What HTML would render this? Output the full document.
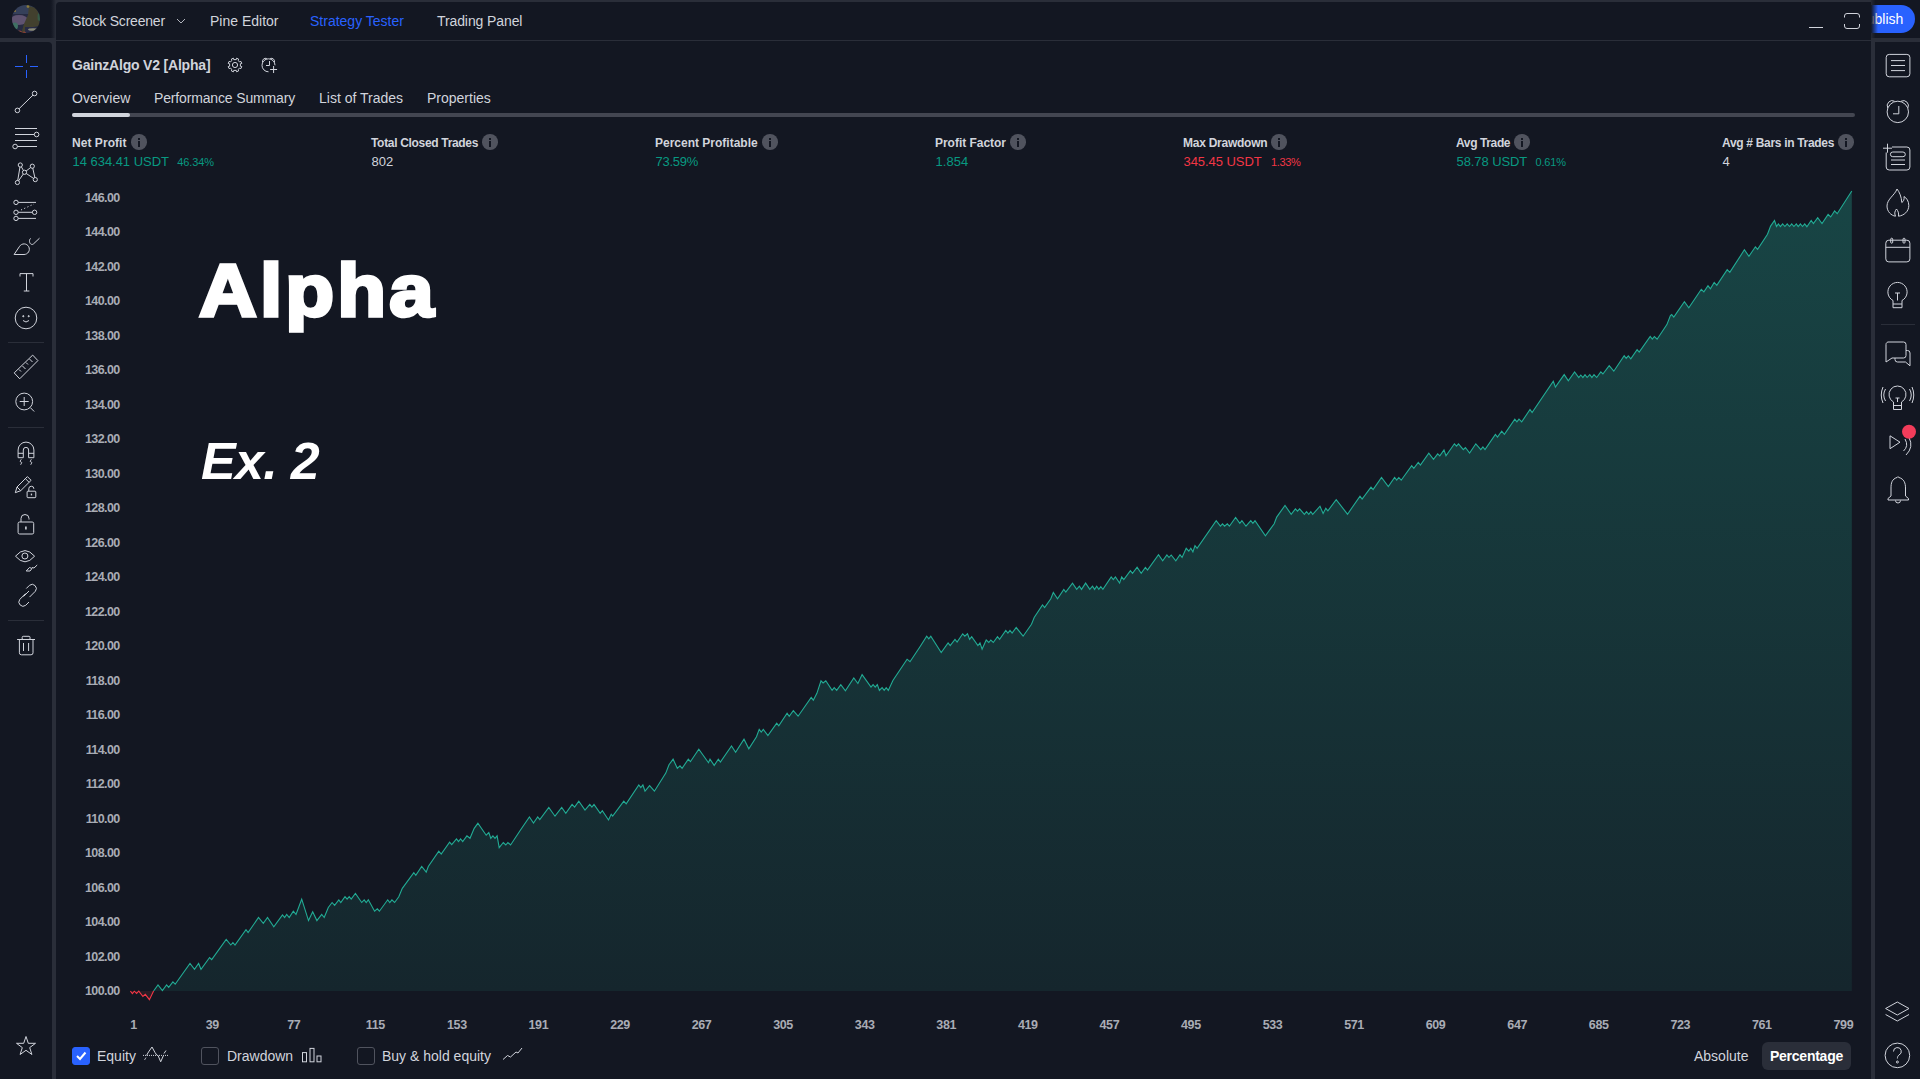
<!DOCTYPE html>
<html><head><meta charset="utf-8">
<style>
*{box-sizing:border-box}
html,body{margin:0;padding:0}
body{width:1920px;height:1079px;overflow:hidden;background:#2a2e39;font-family:"Liberation Sans",sans-serif;color:#d1d4dc;position:relative}
.p{position:absolute;background:#131722}
.t{position:absolute;white-space:nowrap;line-height:1}
svg{position:absolute;overflow:visible}
.yl{left:60px;width:59.6px;text-align:right;font-size:12.5px;letter-spacing:-0.6px;font-weight:bold;color:#a9acb5}
.xl{top:1019px;width:60px;text-align:center;font-size:12.5px;letter-spacing:-0.4px;font-weight:bold;color:#a9acb5}
.ml{top:137px;font-size:12px;font-weight:bold;color:#d1d4dc}
.info{position:absolute;top:134.1px;width:15.6px;height:15.6px;border-radius:50%;background:#50535e}
.info i{position:absolute;left:7px;top:3.5px;width:2px;height:2px;background:#131722}
.info b{position:absolute;left:7px;top:6.5px;width:2px;height:6px;background:#131722}
.mv{top:154.5px;font-size:13px}
.ms{top:156.5px;font-size:11px}
.cb{position:absolute;top:1047px;width:18px;height:18px;border:1px solid #50535e;border-radius:3px}
.lg{top:1049px;font-size:14px;color:#d1d4dc}
</style></head><body>
<div style="position:absolute;left:0;top:0;width:56px;height:38px;background:linear-gradient(90deg,#131722 51px,#2a2e39 56px)"></div>
<div class="p" style="left:0;top:42px;width:52px;height:1037px;border-top-right-radius:4px"></div>
<div style="position:absolute;left:1871px;top:0;width:49px;height:38px;background:linear-gradient(90deg,#252935 0,#131722 4.5px)"></div>
<div class="p" style="left:1875px;top:42px;width:45px;height:1037px"></div>
<svg width="28" height="28" style="left:12.2px;top:4.9px" viewBox="0 0 28 28"><defs><clipPath id="av"><circle cx="14" cy="14" r="14"/></clipPath><filter id="bl"><feGaussianBlur stdDeviation="0.6"/></filter></defs><g clip-path="url(#av)"><g filter="url(#bl)">
<rect x="-2" y="-2" width="32" height="32" fill="#262c42"/>
<rect x="-2" y="-2" width="32" height="11" fill="#34405a"/>
<ellipse cx="7" cy="15" rx="9" ry="5" fill="#5e5270"/>
<path d="M17 1L24 3L28 11L27 21L21 22L15 26L9 29L12 19L16 10Z" fill="#42402e"/>
<rect x="13" y="22" width="16" height="7" fill="#262b45"/>
<ellipse cx="21" cy="24.5" rx="5" ry="1.3" fill="#8a8a78"/>
<ellipse cx="3" cy="21" rx="3" ry="3.5" fill="#3f7064"/>
<ellipse cx="7.5" cy="27" rx="2.5" ry="1.6" fill="#8e4438"/>
<ellipse cx="12" cy="28" rx="2" ry="1.6" fill="#8e4438"/>
<ellipse cx="27.5" cy="12" rx="2" ry="4" fill="#345a46"/>
<circle cx="16" cy="1.5" r="1.4" fill="#8a7a3c"/><circle cx="3" cy="6" r="1" fill="#8a7a3c"/>
</g></g></svg>
<div style="position:absolute;left:1830px;top:5px;width:85px;height:28px;border-radius:14px;background:#2962ff"></div><div class="t" style="left:1803.3px;width:100px;text-align:right;top:12px;font-size:14px;color:#fff">Publish</div>
<div class="p" style="left:56px;top:2px;width:1815px;height:1077px;border-top-left-radius:4px"></div><div style="position:absolute;left:1871px;top:5px;width:7px;height:28px;background:linear-gradient(90deg,#131722,rgba(19,23,34,0))"></div>
<div style="position:absolute;left:56px;top:40px;width:1815px;height:1px;background:#2a2e39"></div>

<div class="t" style="left:72px;top:14px;font-size:14px;letter-spacing:-0.2px">Stock Screener</div>
<div class="t" style="left:210px;top:14px;font-size:14px">Pine Editor</div>
<div class="t" style="left:310px;top:14px;font-size:14px;color:#2962ff">Strategy Tester</div>
<div class="t" style="left:437px;top:14px;font-size:14px;letter-spacing:-0.1px">Trading Panel</div>

<div class="t" style="left:72px;top:58px;font-size:14px;font-weight:bold;letter-spacing:-0.2px">GainzAlgo V2 [Alpha]</div>
<div class="t" style="left:72px;top:91px;font-size:14px">Overview</div>
<div class="t" style="left:154px;top:91px;font-size:14px;letter-spacing:-0.15px">Performance Summary</div>
<div class="t" style="left:319px;top:91px;font-size:14px">List of Trades</div>
<div class="t" style="left:427px;top:91px;font-size:14px">Properties</div>
<div style="position:absolute;left:72px;top:113px;width:1783px;height:4px;border-radius:2px;background:#434651"></div>
<div style="position:absolute;left:72px;top:113px;width:58px;height:4px;border-radius:2px;background:#d1d4dc"></div>

<div class="t ml" style="left:72px;letter-spacing:0.05px">Net Profit</div>
<div class="info" style="left:131.1px"><i></i><b></b></div>
<div class="t mv" style="left:72.5px;color:#089981;letter-spacing:-0.03px">14 634.41 USDT</div>
<div class="t ms" style="left:177.3px;color:#089981;letter-spacing:-0.10px">46.34%</div>
<div class="t ml" style="left:371px;letter-spacing:-0.32px">Total Closed Trades</div>
<div class="info" style="left:482.2px"><i></i><b></b></div>
<div class="t mv" style="left:371.5px;color:#d1d4dc;letter-spacing:0.00px">802</div>
<div class="t ml" style="left:655px;letter-spacing:0.00px">Percent Profitable</div>
<div class="info" style="left:762.2px"><i></i><b></b></div>
<div class="t mv" style="left:655.5px;color:#089981;letter-spacing:-0.25px">73.59%</div>
<div class="t ml" style="left:935px;letter-spacing:-0.03px">Profit Factor</div>
<div class="info" style="left:1010.2px"><i></i><b></b></div>
<div class="t mv" style="left:935.5px;color:#089981;letter-spacing:0.05px">1.854</div>
<div class="t ml" style="left:1183px;letter-spacing:-0.25px">Max Drawdown</div>
<div class="info" style="left:1271.2px"><i></i><b></b></div>
<div class="t mv" style="left:1183.5px;color:#f23645;letter-spacing:-0.05px">345.45 USDT</div>
<div class="t ms" style="left:1271.0px;color:#f23645;letter-spacing:-0.35px">1.33%</div>
<div class="t ml" style="left:1456px;letter-spacing:-0.38px">Avg Trade</div>
<div class="info" style="left:1514.2px"><i></i><b></b></div>
<div class="t mv" style="left:1456.5px;color:#089981;letter-spacing:-0.08px">58.78 USDT</div>
<div class="t ms" style="left:1535.5px;color:#089981;letter-spacing:-0.15px">0.61%</div>
<div class="t ml" style="left:1722px;letter-spacing:-0.31px">Avg # Bars in Trades</div>
<div class="info" style="left:1838.2px"><i></i><b></b></div>
<div class="t mv" style="left:1722.5px;color:#d1d4dc;letter-spacing:0.00px">4</div>

<div class="t yl" style="top:191.5px">146.00</div>
<div class="t yl" style="top:226.0px">144.00</div>
<div class="t yl" style="top:260.5px">142.00</div>
<div class="t yl" style="top:295.0px">140.00</div>
<div class="t yl" style="top:329.5px">138.00</div>
<div class="t yl" style="top:364.0px">136.00</div>
<div class="t yl" style="top:398.6px">134.00</div>
<div class="t yl" style="top:433.1px">132.00</div>
<div class="t yl" style="top:467.6px">130.00</div>
<div class="t yl" style="top:502.1px">128.00</div>
<div class="t yl" style="top:536.6px">126.00</div>
<div class="t yl" style="top:571.1px">124.00</div>
<div class="t yl" style="top:605.6px">122.00</div>
<div class="t yl" style="top:640.1px">120.00</div>
<div class="t yl" style="top:674.6px">118.00</div>
<div class="t yl" style="top:709.1px">116.00</div>
<div class="t yl" style="top:743.6px">114.00</div>
<div class="t yl" style="top:778.1px">112.00</div>
<div class="t yl" style="top:812.7px">110.00</div>
<div class="t yl" style="top:847.2px">108.00</div>
<div class="t yl" style="top:881.7px">106.00</div>
<div class="t yl" style="top:916.2px">104.00</div>
<div class="t yl" style="top:950.7px">102.00</div>
<div class="t yl" style="top:985.2px">100.00</div>

<div class="t xl" style="left:103.6px">1</div>
<div class="t xl" style="left:182.2px">39</div>
<div class="t xl" style="left:263.8px">77</div>
<div class="t xl" style="left:345.3px">115</div>
<div class="t xl" style="left:426.9px">153</div>
<div class="t xl" style="left:508.4px">191</div>
<div class="t xl" style="left:590.0px">229</div>
<div class="t xl" style="left:671.6px">267</div>
<div class="t xl" style="left:753.1px">305</div>
<div class="t xl" style="left:834.7px">343</div>
<div class="t xl" style="left:916.2px">381</div>
<div class="t xl" style="left:997.8px">419</div>
<div class="t xl" style="left:1079.4px">457</div>
<div class="t xl" style="left:1160.9px">495</div>
<div class="t xl" style="left:1242.5px">533</div>
<div class="t xl" style="left:1324.0px">571</div>
<div class="t xl" style="left:1405.6px">609</div>
<div class="t xl" style="left:1487.2px">647</div>
<div class="t xl" style="left:1568.7px">685</div>
<div class="t xl" style="left:1650.3px">723</div>
<div class="t xl" style="left:1731.8px">761</div>
<div class="t xl" style="left:1813.4px">799</div>


<svg width="1920" height="1079" style="left:0;top:0">
<defs>
<linearGradient id="gf" x1="0" y1="190" x2="0" y2="991" gradientUnits="userSpaceOnUse">
<stop offset="0" stop-color="#184545"/><stop offset="1" stop-color="#15262d"/>
</linearGradient>
</defs>
<polygon points="153.6,991 153.6,991 158,985 162.4,990.5 166.6,984.9 168.7,987.3 172.9,981.9 175.2,984.2 190,963.5 194.5,969.3 198.6,963.5 201,969.3 209.6,957.5 211.7,959.6 226.2,939.4 230.8,945 232.9,942.5 235,945 246,929.6 248.1,932.5 258.5,917.5 263.3,923.3 267.5,917.5 273.8,926.9 282.5,915 284.6,917.5 286.7,914.4 289.2,917.5 293.3,911.2 296,914.4 301.7,899.2 308.5,920.6 312.7,911.7 316.9,920.6 321.7,914.4 324.2,917.5 328.3,907.5 332.1,902.5 334.6,905.4 338.8,899.8 340.8,902.5 345,896.7 347.1,899.2 349.2,896.7 351.2,899.2 355.4,893.5 361.7,902.5 364.2,899.8 366.2,902.5 368.3,899.8 374.6,911.2 377.3,908.8 379.4,911.2 387.7,899.8 389.8,902.5 391.9,899.8 394.6,902.5 398.8,896.7 402.3,888.3 413.8,872.7 415.8,875.4 421.7,866.5 426.2,872.1 428.3,866.5 438.8,851.2 441.2,854 449.6,842.1 451.7,844.6 456.5,838.8 458.5,841.5 460.6,838.8 462.7,841.5 466.9,835.8 470,838.3 474.2,828.3 477.9,823.3 486.2,835.2 488.8,832.5 490.8,838.3 492.9,835.8 495,838.3 497.1,835.8 499.2,847.7 503.3,842.5 505.8,845 507.9,842.5 510.6,845 520,830.8 529.4,816.9 533.5,823.1 537.7,816.9 539.8,819.6 548.8,807.5 555,816.2 561.7,807.5 565.8,813.3 572.1,804.4 574.6,807.1 578.8,801.2 585,810 589.8,804.4 591.9,807.1 594,804.4 600.2,813.3 602.3,810.6 608.5,820 611.2,814.2 612.7,816.2 623.8,801.2 626.2,803.8 638.8,785 640.8,787.7 642.9,785 645,791.2 649.6,785.6 654.4,791.2 665.8,773.1 669,764.8 673.1,759.2 677.3,768.3 680,765.8 682.1,768.3 688.3,759.2 690.4,761.7 698.8,749.2 708.5,762.7 710,759.2 714.2,765.4 718.3,759.2 720.4,762.1 731.5,746 735.6,752.3 744,739.2 748.8,748.8 756.5,736.7 759.2,729.4 761.2,732.1 763.3,729.4 767.9,735.6 776.7,723.1 778.8,725.8 787.1,713.3 789.2,716.2 793.3,710.6 798.1,716.2 811.2,697.5 813.3,700.2 816.9,693.3 821,680.8 823.1,682.9 825.8,680.8 832.1,690.4 834.2,687.7 836.7,690.4 840.8,684.6 845.4,690.8 853.8,677.9 857.9,683.5 862.1,674.6 871,687.1 873.1,684.6 875.2,687.1 877.3,684.6 879.4,690.4 882.1,687.7 884.2,690.4 886.2,687.7 888.3,690.4 892.9,680.4 907.1,659.2 910,661.7 920,646.7 926.7,636.2 928.8,638.8 930.8,636.2 941.2,652.5 948.1,642.9 950.2,645.6 955,639.4 957.1,642.1 962.7,633.8 964.8,636.2 967.5,633.8 969.6,639.4 971.7,636.7 977.9,645.6 980,642.9 982.1,649.2 986.2,640 988.8,642.5 990.8,640 993.3,642.5 997.5,636.7 999.6,639.4 1005.8,630.4 1007.9,633.1 1010,630.4 1012.1,633.1 1016.2,627.5 1023.1,636.2 1031.5,624.2 1034.2,617.5 1042.5,605 1044.6,607.5 1050.8,598.8 1053.3,592.5 1057.5,598.8 1063.8,589.4 1065.8,592.1 1072.5,583.1 1076.7,589.4 1079.4,586.2 1081.5,589.4 1085.6,583.1 1089.8,589.4 1092.5,586.2 1094.6,589.4 1096.7,586.2 1098.8,589.4 1100.8,586.7 1102.9,589.4 1111.2,576.9 1113.3,579.6 1115.4,576.9 1119.6,583.1 1121.7,576.9 1123.8,579.6 1130.4,570.6 1132.5,573.3 1137.1,567.1 1141.2,573.3 1145.4,567.5 1147.5,570 1158.5,554.6 1162.7,560.8 1166.9,555 1169,557.5 1171.2,555 1175.8,560.8 1180,554.6 1182.1,557.5 1186.2,548.3 1188.8,551.2 1190.8,548.3 1192.9,551.9 1195,545.6 1197.1,548.3 1216.2,520.6 1220.4,526.2 1222.5,523.8 1224.6,526.2 1227.3,523.8 1229.4,526.2 1235.6,517.5 1239.8,523.3 1241.9,520.6 1246,526.2 1250.8,520.6 1252.9,523.3 1255,520.6 1265.4,535.8 1274.2,523.8 1276.7,517.1 1285,505.4 1291.2,514.4 1295.4,508.8 1297.5,511.2 1299.6,508.8 1304.4,514.4 1306.5,511.7 1308.8,514.4 1310.8,511.7 1312.7,514.4 1320,506.2 1323.1,513.5 1325.8,508.3 1327.9,510.8 1336.2,499.6 1347.5,514.2 1360,496.2 1362.1,499 1371,487.1 1373.1,489.6 1381.5,477.5 1388.3,486.5 1394.6,477.5 1396.7,480.2 1398.8,477.5 1401.2,480.2 1411.7,465.6 1413.8,468.3 1418.3,462.5 1420.4,465 1428.8,453.1 1433.5,459.4 1437.7,453.8 1439.8,455.8 1444,450 1446,455.8 1454.4,443.8 1456.5,446.2 1458.5,443.8 1463.3,449.6 1465.4,447.5 1469.6,453.1 1475.8,443.8 1480.8,449.6 1482.9,446.9 1485,449.6 1495.4,434.4 1497.5,437.1 1501.7,431.2 1504.4,434.4 1514.8,419.2 1516.9,421.9 1519,419.2 1521.7,421.9 1530,409.4 1532.1,412.5 1553.3,381.2 1555.4,387.1 1564.2,374.6 1568.3,380.8 1574.6,371.9 1578.8,377.5 1580.8,375 1582.9,377.5 1585,374.6 1587.1,377.5 1589.8,374.6 1591.9,377.5 1594,374.6 1596.7,377.5 1600.8,371.9 1602.9,374 1609.2,365.6 1613.8,371.2 1624.2,355.8 1626.2,358.3 1628.3,355.8 1630.8,358.8 1637.1,349.6 1639.2,352.1 1650.2,336.5 1652.3,339.2 1654.4,336.5 1657.1,339.2 1666.9,324.6 1670.4,315.6 1671.7,314.6 1673.8,317.1 1684.4,301.7 1688.8,307.8 1701.3,289.3 1703.9,291.9 1708,285.8 1710.4,288.8 1714.2,282.5 1716.8,285.4 1727.2,269.6 1729.8,272.4 1744.4,249.8 1748.9,256.3 1755.4,246.8 1757.6,249.4 1767.5,234.2 1770.6,226.1 1774.5,220.5 1776.5,226.5 1778.4,223.9 1780.4,226.5 1782.6,223.9 1784.9,226.5 1787.2,223.9 1789.5,226.5 1791.7,223.9 1793.9,226.5 1796.3,223.9 1798.2,226.5 1800.4,223.9 1802.5,226.5 1804.7,223.9 1806.9,226.7 1811.2,220.5 1813.4,223.5 1817.7,217.6 1822,223.5 1828.1,214.4 1830.7,217 1834.6,210.9 1837.2,213.7 1851.8,191 1851.8,991" fill="url(#gf)"/>
<polygon points="130.4,991 130.4,991.2 132.4,993.6 134.3,991.2 136.6,993.4 138.8,991.2 142.9,996.5 145.3,994.4 149.4,999.7 153.6,991 153.6,991" fill="#2a1d26"/>
<polyline points="153.6,991 158,985 162.4,990.5 166.6,984.9 168.7,987.3 172.9,981.9 175.2,984.2 190,963.5 194.5,969.3 198.6,963.5 201,969.3 209.6,957.5 211.7,959.6 226.2,939.4 230.8,945 232.9,942.5 235,945 246,929.6 248.1,932.5 258.5,917.5 263.3,923.3 267.5,917.5 273.8,926.9 282.5,915 284.6,917.5 286.7,914.4 289.2,917.5 293.3,911.2 296,914.4 301.7,899.2 308.5,920.6 312.7,911.7 316.9,920.6 321.7,914.4 324.2,917.5 328.3,907.5 332.1,902.5 334.6,905.4 338.8,899.8 340.8,902.5 345,896.7 347.1,899.2 349.2,896.7 351.2,899.2 355.4,893.5 361.7,902.5 364.2,899.8 366.2,902.5 368.3,899.8 374.6,911.2 377.3,908.8 379.4,911.2 387.7,899.8 389.8,902.5 391.9,899.8 394.6,902.5 398.8,896.7 402.3,888.3 413.8,872.7 415.8,875.4 421.7,866.5 426.2,872.1 428.3,866.5 438.8,851.2 441.2,854 449.6,842.1 451.7,844.6 456.5,838.8 458.5,841.5 460.6,838.8 462.7,841.5 466.9,835.8 470,838.3 474.2,828.3 477.9,823.3 486.2,835.2 488.8,832.5 490.8,838.3 492.9,835.8 495,838.3 497.1,835.8 499.2,847.7 503.3,842.5 505.8,845 507.9,842.5 510.6,845 520,830.8 529.4,816.9 533.5,823.1 537.7,816.9 539.8,819.6 548.8,807.5 555,816.2 561.7,807.5 565.8,813.3 572.1,804.4 574.6,807.1 578.8,801.2 585,810 589.8,804.4 591.9,807.1 594,804.4 600.2,813.3 602.3,810.6 608.5,820 611.2,814.2 612.7,816.2 623.8,801.2 626.2,803.8 638.8,785 640.8,787.7 642.9,785 645,791.2 649.6,785.6 654.4,791.2 665.8,773.1 669,764.8 673.1,759.2 677.3,768.3 680,765.8 682.1,768.3 688.3,759.2 690.4,761.7 698.8,749.2 708.5,762.7 710,759.2 714.2,765.4 718.3,759.2 720.4,762.1 731.5,746 735.6,752.3 744,739.2 748.8,748.8 756.5,736.7 759.2,729.4 761.2,732.1 763.3,729.4 767.9,735.6 776.7,723.1 778.8,725.8 787.1,713.3 789.2,716.2 793.3,710.6 798.1,716.2 811.2,697.5 813.3,700.2 816.9,693.3 821,680.8 823.1,682.9 825.8,680.8 832.1,690.4 834.2,687.7 836.7,690.4 840.8,684.6 845.4,690.8 853.8,677.9 857.9,683.5 862.1,674.6 871,687.1 873.1,684.6 875.2,687.1 877.3,684.6 879.4,690.4 882.1,687.7 884.2,690.4 886.2,687.7 888.3,690.4 892.9,680.4 907.1,659.2 910,661.7 920,646.7 926.7,636.2 928.8,638.8 930.8,636.2 941.2,652.5 948.1,642.9 950.2,645.6 955,639.4 957.1,642.1 962.7,633.8 964.8,636.2 967.5,633.8 969.6,639.4 971.7,636.7 977.9,645.6 980,642.9 982.1,649.2 986.2,640 988.8,642.5 990.8,640 993.3,642.5 997.5,636.7 999.6,639.4 1005.8,630.4 1007.9,633.1 1010,630.4 1012.1,633.1 1016.2,627.5 1023.1,636.2 1031.5,624.2 1034.2,617.5 1042.5,605 1044.6,607.5 1050.8,598.8 1053.3,592.5 1057.5,598.8 1063.8,589.4 1065.8,592.1 1072.5,583.1 1076.7,589.4 1079.4,586.2 1081.5,589.4 1085.6,583.1 1089.8,589.4 1092.5,586.2 1094.6,589.4 1096.7,586.2 1098.8,589.4 1100.8,586.7 1102.9,589.4 1111.2,576.9 1113.3,579.6 1115.4,576.9 1119.6,583.1 1121.7,576.9 1123.8,579.6 1130.4,570.6 1132.5,573.3 1137.1,567.1 1141.2,573.3 1145.4,567.5 1147.5,570 1158.5,554.6 1162.7,560.8 1166.9,555 1169,557.5 1171.2,555 1175.8,560.8 1180,554.6 1182.1,557.5 1186.2,548.3 1188.8,551.2 1190.8,548.3 1192.9,551.9 1195,545.6 1197.1,548.3 1216.2,520.6 1220.4,526.2 1222.5,523.8 1224.6,526.2 1227.3,523.8 1229.4,526.2 1235.6,517.5 1239.8,523.3 1241.9,520.6 1246,526.2 1250.8,520.6 1252.9,523.3 1255,520.6 1265.4,535.8 1274.2,523.8 1276.7,517.1 1285,505.4 1291.2,514.4 1295.4,508.8 1297.5,511.2 1299.6,508.8 1304.4,514.4 1306.5,511.7 1308.8,514.4 1310.8,511.7 1312.7,514.4 1320,506.2 1323.1,513.5 1325.8,508.3 1327.9,510.8 1336.2,499.6 1347.5,514.2 1360,496.2 1362.1,499 1371,487.1 1373.1,489.6 1381.5,477.5 1388.3,486.5 1394.6,477.5 1396.7,480.2 1398.8,477.5 1401.2,480.2 1411.7,465.6 1413.8,468.3 1418.3,462.5 1420.4,465 1428.8,453.1 1433.5,459.4 1437.7,453.8 1439.8,455.8 1444,450 1446,455.8 1454.4,443.8 1456.5,446.2 1458.5,443.8 1463.3,449.6 1465.4,447.5 1469.6,453.1 1475.8,443.8 1480.8,449.6 1482.9,446.9 1485,449.6 1495.4,434.4 1497.5,437.1 1501.7,431.2 1504.4,434.4 1514.8,419.2 1516.9,421.9 1519,419.2 1521.7,421.9 1530,409.4 1532.1,412.5 1553.3,381.2 1555.4,387.1 1564.2,374.6 1568.3,380.8 1574.6,371.9 1578.8,377.5 1580.8,375 1582.9,377.5 1585,374.6 1587.1,377.5 1589.8,374.6 1591.9,377.5 1594,374.6 1596.7,377.5 1600.8,371.9 1602.9,374 1609.2,365.6 1613.8,371.2 1624.2,355.8 1626.2,358.3 1628.3,355.8 1630.8,358.8 1637.1,349.6 1639.2,352.1 1650.2,336.5 1652.3,339.2 1654.4,336.5 1657.1,339.2 1666.9,324.6 1670.4,315.6 1671.7,314.6 1673.8,317.1 1684.4,301.7 1688.8,307.8 1701.3,289.3 1703.9,291.9 1708,285.8 1710.4,288.8 1714.2,282.5 1716.8,285.4 1727.2,269.6 1729.8,272.4 1744.4,249.8 1748.9,256.3 1755.4,246.8 1757.6,249.4 1767.5,234.2 1770.6,226.1 1774.5,220.5 1776.5,226.5 1778.4,223.9 1780.4,226.5 1782.6,223.9 1784.9,226.5 1787.2,223.9 1789.5,226.5 1791.7,223.9 1793.9,226.5 1796.3,223.9 1798.2,226.5 1800.4,223.9 1802.5,226.5 1804.7,223.9 1806.9,226.7 1811.2,220.5 1813.4,223.5 1817.7,217.6 1822,223.5 1828.1,214.4 1830.7,217 1834.6,210.9 1837.2,213.7 1851.8,191" fill="none" stroke="#22ab94" stroke-width="1.1"/>
<polyline points="130.4,991.2 132.4,993.6 134.3,991.2 136.6,993.4 138.8,991.2 142.9,996.5 145.3,994.4 149.4,999.7 153.6,991" fill="none" stroke="#f23645" stroke-width="1.1"/>
</svg>

<div class="t" style="left:199px;top:252.7px;font-size:75px;font-weight:bold;color:#fff;-webkit-text-stroke:3.5px #fff;letter-spacing:3px;transform:scaleX(1.065);transform-origin:0 0">Alpha</div>
<div class="t" style="left:201px;top:435px;font-size:52px;font-style:italic;font-weight:bold;color:#fff;letter-spacing:-0.7px">Ex. 2</div>

<div class="cb" style="left:72px;background:#2962ff;border-color:#2962ff"></div>
<div class="t lg" style="left:97px">Equity</div>
<div class="cb" style="left:201px"></div>
<div class="t lg" style="left:227px">Drawdown</div>
<div class="cb" style="left:357px"></div>
<div class="t lg" style="left:382px">Buy &amp; hold equity</div>
<div class="t lg" style="left:1694px">Absolute</div>
<div style="position:absolute;left:1762px;top:1042px;width:89px;height:28px;border-radius:6px;background:#2a2e39"></div>
<div class="t lg" style="left:1770px;font-weight:bold;color:#fff;letter-spacing:-0.25px">Percentage</div>

<svg width="1920" height="1079" style="left:0;top:0;z-index:5" >
<!-- window controls -->
<path d="M1809 27.5H1823" fill="none" stroke="#d1d4dc" stroke-width="1"/>
<path d="M1844.5 17.5V16a2.5 2.5 0 0 1 2.5-2.5H1857a2.5 2.5 0 0 1 2.5 2.5V17.5M1844.5 24V26a2.5 2.5 0 0 0 2.5 2.5H1857a2.5 2.5 0 0 0 2.5-2.5V24" fill="none" stroke="#d1d4dc" stroke-width="1"/>
<!-- chevron -->
<path d="M177 19L181 23L185 19" fill="none" stroke="#b2b5be" stroke-width="1"/>
<!-- gear -->
<g transform="translate(235,65)" fill="none" stroke="#d1d4dc" stroke-width="1">
<path d="M-1.6-6.8L-1.2-5.3A5.5 5.5 0 0 1 1.2-5.3L1.6-6.8L3.6-5.9L3.2-4.4A5.5 5.5 0 0 1 4.4-3.2L5.9-3.6L6.8-1.6L5.3-1.2A5.5 5.5 0 0 1 5.3 1.2L6.8 1.6L5.9 3.6L4.4 3.2A5.5 5.5 0 0 1 3.2 4.4L3.6 5.9L1.6 6.8L1.2 5.3A5.5 5.5 0 0 1 -1.2 5.3L-1.6 6.8L-3.6 5.9L-3.2 4.4A5.5 5.5 0 0 1 -4.4 3.2L-5.9 3.6L-6.8 1.6L-5.3 1.2A5.5 5.5 0 0 1 -5.3 -1.2L-6.8 -1.6L-5.9 -3.6L-4.4 -3.2A5.5 5.5 0 0 1 -3.2 -4.4L-3.6 -5.9Z"/>
<circle r="2.6"/>
</g>
<!-- alarm plus -->
<g fill="none" stroke="#d1d4dc" stroke-width="1">
<path d="M268.5 71.8A6.5 6.5 0 1 1 275 65.3"/>
<path d="M262.6 62.5A3.2 3.2 0 0 1 266.8 58.5M274.4 62.5A3.2 3.2 0 0 0 270.2 58.5"/>
<path d="M269.5 61V65.5H266"/>
<path d="M273.6 66V73M270.1 69.5H277.1"/>
</g>
<!-- left toolbar -->
<g stroke="#2962ff" stroke-width="1" fill="none"><path d="M15 66.5H23M30 66.5H38M26.5 55V63M26.5 70V78"/></g>
<g fill="none" stroke="#d1d4dc" stroke-width="1">
<circle cx="17.4" cy="110.4" r="2.3"/><circle cx="34.6" cy="93.5" r="2.3"/><path d="M19 108.8L33 95.1"/>
<path d="M15 128.5H37M15 134.5H34.3M15 140.5H37M17.4 146.5H37"/><circle cx="36.6" cy="134.5" r="2.3"/><circle cx="15.1" cy="146.5" r="2.3"/>
<path d="M17.4 182.5L20.3 165L24.5 172.3L32.3 166.2L35.3 179.6L24.5 172.3L17.4 182.5"/>
<circle cx="20.3" cy="165" r="2.1" fill="#131722"/><circle cx="32.3" cy="166.2" r="2.1" fill="#131722"/><circle cx="24.5" cy="172.3" r="2.1" fill="#131722"/><circle cx="17.4" cy="182.5" r="2.1" fill="#131722"/><circle cx="35.3" cy="179.6" r="2.1" fill="#131722"/>
<circle cx="16" cy="202.4" r="2.2"/><path d="M18.2 202.4H36"/>
<circle cx="16" cy="212.3" r="2.2"/><circle cx="34.6" cy="212.3" r="2.2"/><path d="M18.2 212.3H32.4"/>
<circle cx="16" cy="218.4" r="2.2"/><path d="M18.2 218.4H36"/>
<path d="M21 210L34 204" stroke-dasharray="1.2 2.3"/>
<path d="M14.1 254.5L24 254.5A5.3 5.3 0 1 0 19.6 246.3Z"/>
<path d="M30.6 238.4C28.8 239.8 29.2 243.8 31.6 244.4C32.4 244.6 33 244.3 33.6 243.8L39.5 238.2"/>
<path d="M20 276.5V273.6H33V276.5M26.5 273.6V291M23.8 291H29.4"/>
<circle cx="26" cy="318" r="10.8"/><circle cx="23.3" cy="316.2" r="0.6" fill="#d1d4dc"/><circle cx="28.7" cy="316.2" r="0.6" fill="#d1d4dc"/><path d="M23 320.5Q26 323.5 29 320.5"/>
</g>
<path d="M8 342.5H44M8 427.5H44M8 620.5H44" stroke="#2a2e39" stroke-width="1"/>
<g fill="none" stroke="#d1d4dc" stroke-width="1">
<path d="M14.2 372.9L32.7 355.1L37.9 360.6L19.7 378.8Z"/><path d="M19 369.5L21 371.5M22.5 366L25.5 369M26 362.5L28 364.5M29.5 359L32.5 362"/>
<circle cx="24.2" cy="401.5" r="8.4"/><path d="M24.2 397V406M19.7 401.5H28.7M30.3 407.6L34.2 411.5"/>
<path d="M18.1 457.7V450A7.9 7.9 0 0 1 33.9 450V457.7H28.6V450A2.65 2.65 0 0 0 23.3 450V457.7Z"/><path d="M18.1 453.3H23.3M28.6 453.3H33.9"/><path d="M21.3 459.3L20 461.3L21.8 462.6L20.6 464.8M31.4 459.3L30.1 461.3L31.9 462.6L30.7 464.8" stroke-width="0.9"/>
<path d="M15.3 492.7L17 487L27.4 476.6L31.1 480.3L20.7 490.7Z M25.4 478.6L29.1 482.3M17 487L20.7 490.7"/>
<rect x="27.1" y="491.2" width="8.7" height="6.5" rx="0.8"/><path d="M28.8 491.2V488.8A2.55 2.55 0 0 1 33.9 488.8"/><path d="M31.45 493.6V495.4" stroke-width="1.3"/>
<rect x="18.1" y="522" width="15.6" height="12" rx="1.5"/><path d="M21 522V518.5A4 4 0 0 1 29 518.5V519.5"/><path d="M25.9 526.5V529.5" stroke-width="1.6"/>
<path d="M15.5 556.2Q25 545 34.6 556.2Q25 567.4 15.5 556.2Z"/><circle cx="24.9" cy="556" r="3"/>
<path d="M26.2 571L29.5 567.5L32 568.5L30 571Z M32 567.5L34 568L37.2 565"/>
<path d="M23.5 596.5L29 591" /><path d="M26.3 588.5L29.5 585.3A4.2 4.2 0 0 1 35.4 591.2L29.5 597.1"/><path d="M25.7 593.5L19.8 599.4A4.2 4.2 0 0 0 25.7 605.3L29 602"/>
<path d="M17.1 639.5H35M22.2 639.5V637.3A1 1 0 0 1 23.2 636.3H29A1 1 0 0 1 30 637.3V639.5M19.4 639.5V652.8A2 2 0 0 0 21.4 654.8H31A2 2 0 0 0 33 652.8V639.5M23.5 643V651M28.6 643V651"/>
<path d="M26 1036.5L28.3 1043.3H35.5L29.7 1047.6L31.9 1054.5L26 1050.3L20.1 1054.5L22.3 1047.6L16.5 1043.3H23.7Z"/>
</g>
<!-- right toolbar -->
<g fill="none" stroke="#d1d4dc" stroke-width="1">
<rect x="1886.2" y="54.4" width="23.7" height="22.4" rx="3"/><path d="M1891 60.6H1905M1891 65.5H1905M1891 70.6H1905"/>
<circle cx="1897.8" cy="111.9" r="10.7"/><path d="M1887.8 108A5 5 0 0 1 1894.5 101.2M1907.8 108A5 5 0 0 0 1901.1 101.2"/><path d="M1898.8 106V113.8H1893"/>
<path d="M1892 147H1906.9A3 3 0 0 1 1909.9 150V167A3 3 0 0 1 1906.9 170H1889.2A3 3 0 0 1 1886.2 167V152.5"/><path d="M1887.5 143.7V152.7M1883 148.2H1892"/><rect x="1890.4" y="152" width="14.9" height="4.7" rx="2.35"/><path d="M1891 160H1905M1891 164.5H1905"/>
<path d="M1897 189C1895 195 1887 199 1887 206C1887 211.5 1891 215.5 1895.5 216.2C1894 213 1895 211 1896.5 209C1898 211 1899 213 1898.5 216.2C1904 215.5 1908.8 211.5 1908.8 205.5C1908.8 201 1906.5 198 1904 196.5C1904.5 199.5 1903.5 201.5 1901.8 202.5C1901.5 197 1899.5 192 1897 189Z"/>
<rect x="1885.8" y="240.2" width="24.1" height="21.7" rx="3"/><path d="M1885.8 247.3H1909.9"/><rect x="1890.7" y="238.2" width="2" height="5" rx="1"/><rect x="1903" y="238.2" width="2" height="5" rx="1"/>
<path d="M1893 300.5A9.6 9.6 0 1 1 1902 300.5V307.7H1893Z"/><path d="M1893 304H1902M1897.5 293V300.5M1895 293H1900"/>
</g>
<path d="M1881 324.5H1915" stroke="#2a2e39" stroke-width="1"/>
<g fill="none" stroke="#d1d4dc" stroke-width="1">
<path d="M1889 342H1903.5A2.5 2.5 0 0 1 1906 344.5V355.5A2.5 2.5 0 0 1 1903.5 358H1892L1886 362V344.5A2.5 2.5 0 0 1 1889 342Z"/>
<path d="M1906 350.5H1907.5A2.5 2.5 0 0 1 1910 353V365.8L1905.5 362H1897.5A2.5 2.5 0 0 1 1895 359.5V358"/>
<path d="M1893.5 402A8.5 8.5 0 1 1 1901.5 402V409.5H1893.5Z"/><path d="M1893.5 405.5H1901.5M1897.5 398V402M1895.5 398H1899.5"/>
<path d="M1885.5 389Q1882 395 1885.5 401M1883 387Q1879.5 395 1883 403M1909.5 389Q1913 395 1909.5 401M1912 387Q1915.5 395 1912 403"/>
<path d="M1890 435.8V448.7L1900 442.2Z"/><path d="M1905 439Q1909 446 1903.5 451M1909 437.5Q1914 447 1906 455"/>
<path d="M1898 476.7A1.5 1.5 0 0 0 1897 477.5C1892 479 1891 483 1891 488V496L1888 498.5V500H1908.5V498.5L1905.5 496V488C1905.5 483 1904 479 1899 477.5Z"/><path d="M1895.5 500.5A2.5 2.5 0 0 0 1900.5 500.5"/>
<path d="M1897.3 1002L1909 1008.5L1897.3 1015L1885.6 1008.5Z"/><path d="M1885.6 1014.5L1897.3 1021L1909 1014.5"/>
<circle cx="1897.4" cy="1055.4" r="12.3"/><path d="M1893.5 1051.5A3.9 3.9 0 1 1 1899 1055C1897.8 1056 1897.4 1057 1897.4 1058.5"/><circle cx="1897.4" cy="1062" r="1"/>
</g>
<circle cx="1909" cy="431.7" r="7" fill="#f23c5a"/>
<!-- legend icons -->
<path d="M77 1056L80 1059L85.5 1052.5" fill="none" stroke="#fff" stroke-width="2"/>
<path d="M146.5 1055.4L148.5 1052L152 1047L155 1052.5L157 1055.4M158 1055.4L160.7 1061.8L163.5 1055.4M164 1053.5L166 1050.5" fill="none" stroke="#d1d4dc" stroke-width="1"/>
<path d="M143 1055.4H168.5" fill="none" stroke="#d1d4dc" stroke-width="1" stroke-dasharray="1 1"/>
<path d="M144.5 1060L146 1057.5" fill="none" stroke="#d1d4dc" stroke-width="0.8"/>
<g fill="none" stroke="#d1d4dc" stroke-width="1"><rect x="302.5" y="1052.6" width="4" height="9.2"/><rect x="310" y="1048.4" width="4" height="13.4"/><rect x="317" y="1056" width="4" height="5.8"/></g>
<path d="M503 1059.5L507.5 1055.5L510.5 1057L516 1052L518 1053L522 1048" fill="none" stroke="#d1d4dc" stroke-width="1"/>
</svg>

</body></html>
